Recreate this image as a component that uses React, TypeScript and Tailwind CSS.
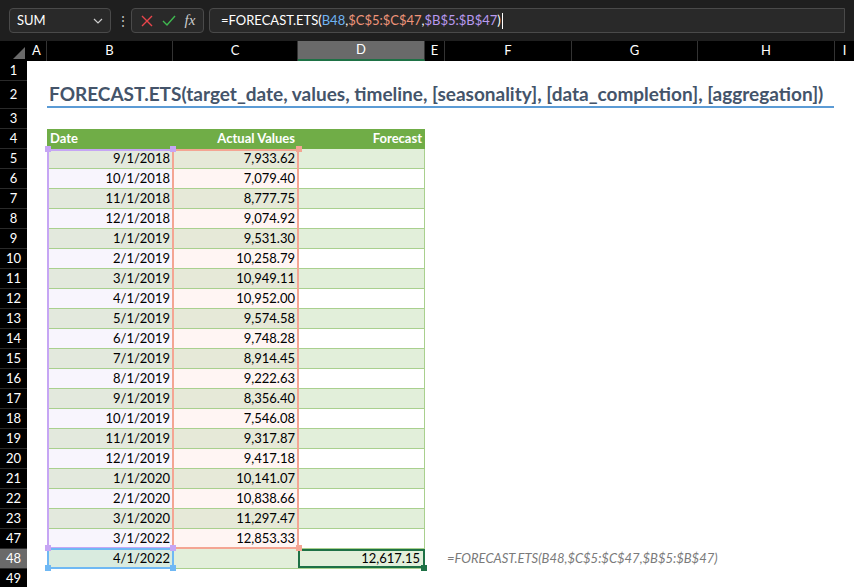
import React from "react";

const cols = [
  { n: "A", w: 20 },
  { n: "B", w: 126 },
  { n: "C", w: 125 },
  { n: "D", w: 127 },
  { n: "E", w: 20 },
  { n: "F", w: 127 },
  { n: "G", w: 126 },
  { n: "H", w: 137 },
  { n: "I", w: 20 },
];

const data: [string, string, string][] = [
  ["5", "9/1/2018", "7,933.62"],
  ["6", "10/1/2018", "7,079.40"],
  ["7", "11/1/2018", "8,777.75"],
  ["8", "12/1/2018", "9,074.92"],
  ["9", "1/1/2019", "9,531.30"],
  ["10", "2/1/2019", "10,258.79"],
  ["11", "3/1/2019", "10,949.11"],
  ["12", "4/1/2019", "10,952.00"],
  ["13", "5/1/2019", "9,574.58"],
  ["14", "6/1/2019", "9,748.28"],
  ["15", "7/1/2019", "8,914.45"],
  ["16", "8/1/2019", "9,222.63"],
  ["17", "9/1/2019", "8,356.40"],
  ["18", "10/1/2019", "7,546.08"],
  ["19", "11/1/2019", "9,317.87"],
  ["20", "12/1/2019", "9,417.18"],
  ["21", "1/1/2020", "10,141.07"],
  ["22", "2/1/2020", "10,838.66"],
  ["23", "3/1/2020", "11,297.47"],
  ["47", "3/1/2022", "12,853.33"],
];

const font = { fontFamily: "Lato, 'Open Sans', sans-serif" };

function RowHead({ n, h, sel }: { n: string; h: number; sel?: boolean }) {
  return (
    <div
      className={`w-[27px] shrink-0 flex items-center justify-center text-[13px] border-b border-[#2a2a2a] ${sel ? "bg-[#6a6a6a] text-white" : "bg-black text-white"}`}
      style={{ height: h }}
    >
      {n}
    </div>
  );
}

export default function App() {
  return (
    <div className="w-[854px] h-[587px] overflow-hidden bg-white relative" style={font}>
      <div className="h-[41px] bg-[#1f1f1f] flex items-center px-[9px] gap-[5px]">
        <div className="w-[102px] h-[25px] border border-[#4a4a4a] rounded bg-[#292929] flex items-center justify-between px-[7px] text-white text-[13px]">
          <span>SUM</span>
          <svg width="10" height="10" viewBox="0 0 10 10"><path d="M1 3l4 4 4-4" stroke="#ccc" fill="none" strokeWidth="1.2" /></svg>
        </div>
        <div className="text-[#bbb] text-[14px] w-[10px] text-center">⋮</div>
        <div className="w-[73px] h-[25px] border border-[#4a4a4a] rounded bg-[#292929] flex items-center justify-around px-1">
          <svg width="14" height="14" viewBox="0 0 14 14"><path d="M2 2l10 10M12 2L2 12" stroke="#e8454b" strokeWidth="1.4" /></svg>
          <svg width="16" height="14" viewBox="0 0 16 14"><path d="M2 7l4 4 8-9" stroke="#3fb950" fill="none" strokeWidth="1.4" /></svg>
          <span className="text-[#ccc] italic text-[15px]" style={{ fontFamily: "'Liberation Serif', serif" }}>fx</span>
        </div>
        <div className="flex-1 h-[25px] border border-[#4a4a4a] rounded-l bg-[#292929] flex items-center pl-[11px] text-[13px] text-white">
          <span>=FORECAST.ETS(</span>
          <span className="text-[#6fb4f2]">B48</span>,
          <span className="text-[#f0957a]">$C$5:$C$47</span>,
          <span className="text-[#b99af0]">$B$5:$B$47</span>)
          <span className="w-[1px] h-[16px] bg-white ml-[1px]" />
        </div>
      </div>
      <div className="flex h-[20px] bg-black text-white text-[13px]">
        <div className="w-[27px] shrink-0 flex items-end justify-end p-[2px]">
          <svg width="12" height="12" viewBox="0 0 12 12"><path d="M12 0V12H0z" fill="#6a6a6a" /></svg>
        </div>
        {cols.map((c) => (
          <div
            key={c.n}
            className={`shrink-0 flex items-center justify-center border-r border-[#333] ${c.n === "D" ? "bg-[#6a6a6a] border-b-2 border-b-[#1e7145]" : ""}`}
            style={{ width: c.w }}
          >
            {c.n}
          </div>
        ))}
      </div>
      <div className="flex">
        <div className="flex flex-col">
          <RowHead n="1" h={20} />
          <RowHead n="2" h={28} />
          <RowHead n="3" h={20} />
          <RowHead n="4" h={20} />
          {data.map((d) => (
            <RowHead key={d[0]} n={d[0]} h={20} />
          ))}
          <RowHead n="48" h={20} sel />
          <RowHead n="49" h={20} />
        </div>
        <div className="flex-1 flex flex-col text-[13px] text-black">
          <div className="h-[20px]" />
          <div className="h-[28px] pl-[20px] pr-[20px]">
            <div className="h-[27px] border-b-2 border-[#5b9bd5] text-[19px] font-bold text-[#44546a] flex items-end pl-[2px] leading-[25px] whitespace-nowrap">
              FORECAST.ETS(target_date, values, timeline, [seasonality], [data_completion], [aggregation])
            </div>
          </div>
          <div className="h-[20px]" />
          <div className="flex h-[20px] ml-[20px]">
            <div className="w-[126px] bg-[#70ad47] text-white font-bold flex items-center px-[3px]">Date</div>
            <div className="w-[125px] bg-[#70ad47] text-white font-bold flex items-center justify-end px-[3px]">Actual Values</div>
            <div className="w-[127px] bg-[#70ad47] text-white font-bold flex items-center justify-end px-[3px]">Forecast</div>
          </div>
          <div className="relative ml-[20px] w-[378px]">
            {data.map((d, i) => {
              const band = i % 2 === 0;
              return (
                <div key={d[0]} className="flex h-[20px]">
                  <div className={`w-[126px] flex items-center justify-end px-[3px] border-b border-[#a9d08e] ${band ? "bg-[#e3e9dd]" : "bg-[#f8f5fd]"}`}>{d[1]}</div>
                  <div className={`w-[125px] flex items-center justify-end px-[3px] border-b border-[#a9d08e] ${band ? "bg-[#e6e9d8]" : "bg-[#fff5f3]"}`}>{d[2]}</div>
                  <div className={`w-[127px] border-b border-r border-[#a9d08e] ${band ? "bg-[#e2efda]" : "bg-white"}`} />
                </div>
              );
            })}
            <div className="flex h-[20px] border-b border-[#a9d08e]">
              <div className="w-[126px] flex items-center justify-end px-[3px] bg-[#d9ebdf]">4/1/2022</div>
              <div className="w-[125px] bg-[#e2efda]" />
              <div className="w-[127px] bg-[#e2efda] flex items-center justify-end px-[3px] border-2 border-[#1e7145]">12,617.15</div>
            </div>
            <div className="absolute left-0 top-0 w-[127px] h-[400px] border-2 border-[#c6a6f4] pointer-events-none" />
            <div className="absolute left-[125px] top-0 w-[127px] h-[400px] border-2 border-[#f4a593] pointer-events-none" />
            <div className="absolute left-0 top-[399px] w-[127px] h-[21px] border-2 border-[#6fb8f4] pointer-events-none" />
            {[[-2, -3, "#c6a6f4"], [123, -3, "#c6a6f4"], [249, -3, "#f4a593"], [249, 396, "#f4a593"], [123, 396, "#c6a6f4"], [-2, 396, "#c6a6f4"], [-2, 416, "#6fb8f4"], [123, 416, "#6fb8f4"], [374, 416, "#1e7145"]].map(([x, y, c], k) => (
              <div key={k} className="absolute w-[6px] h-[6px]" style={{ left: x as number, top: y as number, background: c as string }} />
            ))}
            <div className="absolute left-[400px] top-[400px] h-[20px] flex items-center italic text-[#7a7a7a] text-[13px] whitespace-nowrap">
              =FORECAST.ETS(B48,$C$5:$C$47,$B$5:$B$47)
            </div>
          </div>
        </div>
      </div>
    </div>
  );
}
